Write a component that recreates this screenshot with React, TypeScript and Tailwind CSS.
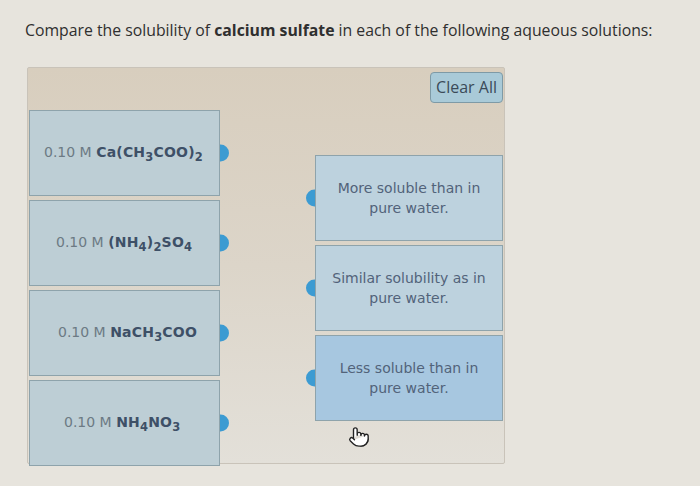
import { Pointer } from "lucide-react";
import type { ReactNode } from "react";

function SourceCard({ children }: { children: ReactNode }) {
  return (
    <div className="relative h-[86px] border border-[#8ea3ab] bg-[#bdced5] flex items-center pl-[14px]">
      <span className="text-[14px] text-[#6c7a84] font-['DejaVu_Sans',sans-serif]">{children}</span>
      <span className="absolute right-[-10px] top-1/2 -translate-y-1/2 w-[9px] h-[17px] rounded-r-full bg-[#3c9bd2]" />
    </div>
  );
}

// Target bucket with a connector knob on its left edge
function TargetCard({ text, active }: { text: ReactNode; active?: boolean }) {
  return (
    <div
      className={`relative h-[86px] border border-[#8ea3ab] flex items-center justify-center text-center ${
        active ? "bg-[#a7c7e0]" : "bg-[#bdd2de]"
      }`}
    >
      <span className="text-[14px] leading-[20px] text-[#52637a] font-['DejaVu_Sans',sans-serif]">{text}</span>
      <span className="absolute left-[-10px] top-1/2 -translate-y-1/2 w-[9px] h-[17px] rounded-l-full bg-[#3c9bd2]" />
    </div>
  );
}

const Formula = ({ children }: { children: ReactNode }) => (
  <b className="text-[#3e5067] font-bold tracking-[0.2px]">{children}</b>
);

const Sub = ({ children }: { children: ReactNode }) => (
  <sub className="text-[11.5px] bottom-0 align-[-4px]">{children}</sub>
);

export default function App() {
  return (
    <div className="w-[700px] h-[486px] bg-[#e7e4dd] overflow-hidden">
      <p className="pt-[19px] pl-[25px] text-[15.8px] text-[#2f2f2f] font-['Open_Sans',sans-serif]">
        Compare the solubility of <b className="font-bold">calcium sulfate</b> in each of the following
        aqueous solutions:
      </p>

      <div className="ml-[27px] mt-[24px] w-[478px] h-[397px] border border-[#c9c3b9] rounded-[2px] bg-gradient-to-b from-[#d8cebe] via-[#dcd5c9] to-[#e3e0d9]">
        <div className="h-[42px] flex justify-end items-start pt-[4px] pr-[1px]">
          <button className="h-[31px] px-[5px] rounded-[4px] border border-[#7e9aa6] bg-[#a9cad8] text-[16px] text-[#3b4a58] font-['Open_Sans',sans-serif]">
            Clear All
          </button>
        </div>

        <div className="flex">
          <div className="w-[191px] ml-[1px] flex flex-col gap-[4px]">
            <SourceCard>
              0.10 M{" "}
              <Formula>
                Ca(CH<Sub>3</Sub>COO)<Sub>2</Sub>
              </Formula>
            </SourceCard>
            <SourceCard>
              <span className="pl-[12px]">
                0.10 M{" "}
                <Formula>
                  (NH<Sub>4</Sub>)<Sub>2</Sub>SO<Sub>4</Sub>
                </Formula>
              </span>
            </SourceCard>
            <SourceCard>
              <span className="pl-[14px]">
                0.10 M{" "}
                <Formula>
                  NaCH<Sub>3</Sub>COO
                </Formula>
              </span>
            </SourceCard>
            <SourceCard>
              <span className="pl-[20px]">
                0.10 M{" "}
                <Formula>
                  NH<Sub>4</Sub>NO<Sub>3</Sub>
                </Formula>
              </span>
            </SourceCard>
          </div>

          <div className="ml-auto mr-[1px] w-[188px] mt-[45px] flex flex-col gap-[4px]">
            <TargetCard
              text={
                <>
                  More soluble than in
                  <br />
                  pure water.
                </>
              }
            />
            <TargetCard
              text={
                <>
                  Similar solubility as in
                  <br />
                  pure water.
                </>
              }
            />
            <TargetCard
              active
              text={
                <>
                  Less soluble than in
                  <br />
                  pure water.
                </>
              }
            />
            <div className="pl-[33px] pt-[1px]">
              <Pointer size={22} strokeWidth={1.5} fill="#ffffff" color="#222222" />
            </div>
          </div>
        </div>
      </div>
    </div>
  );
}
